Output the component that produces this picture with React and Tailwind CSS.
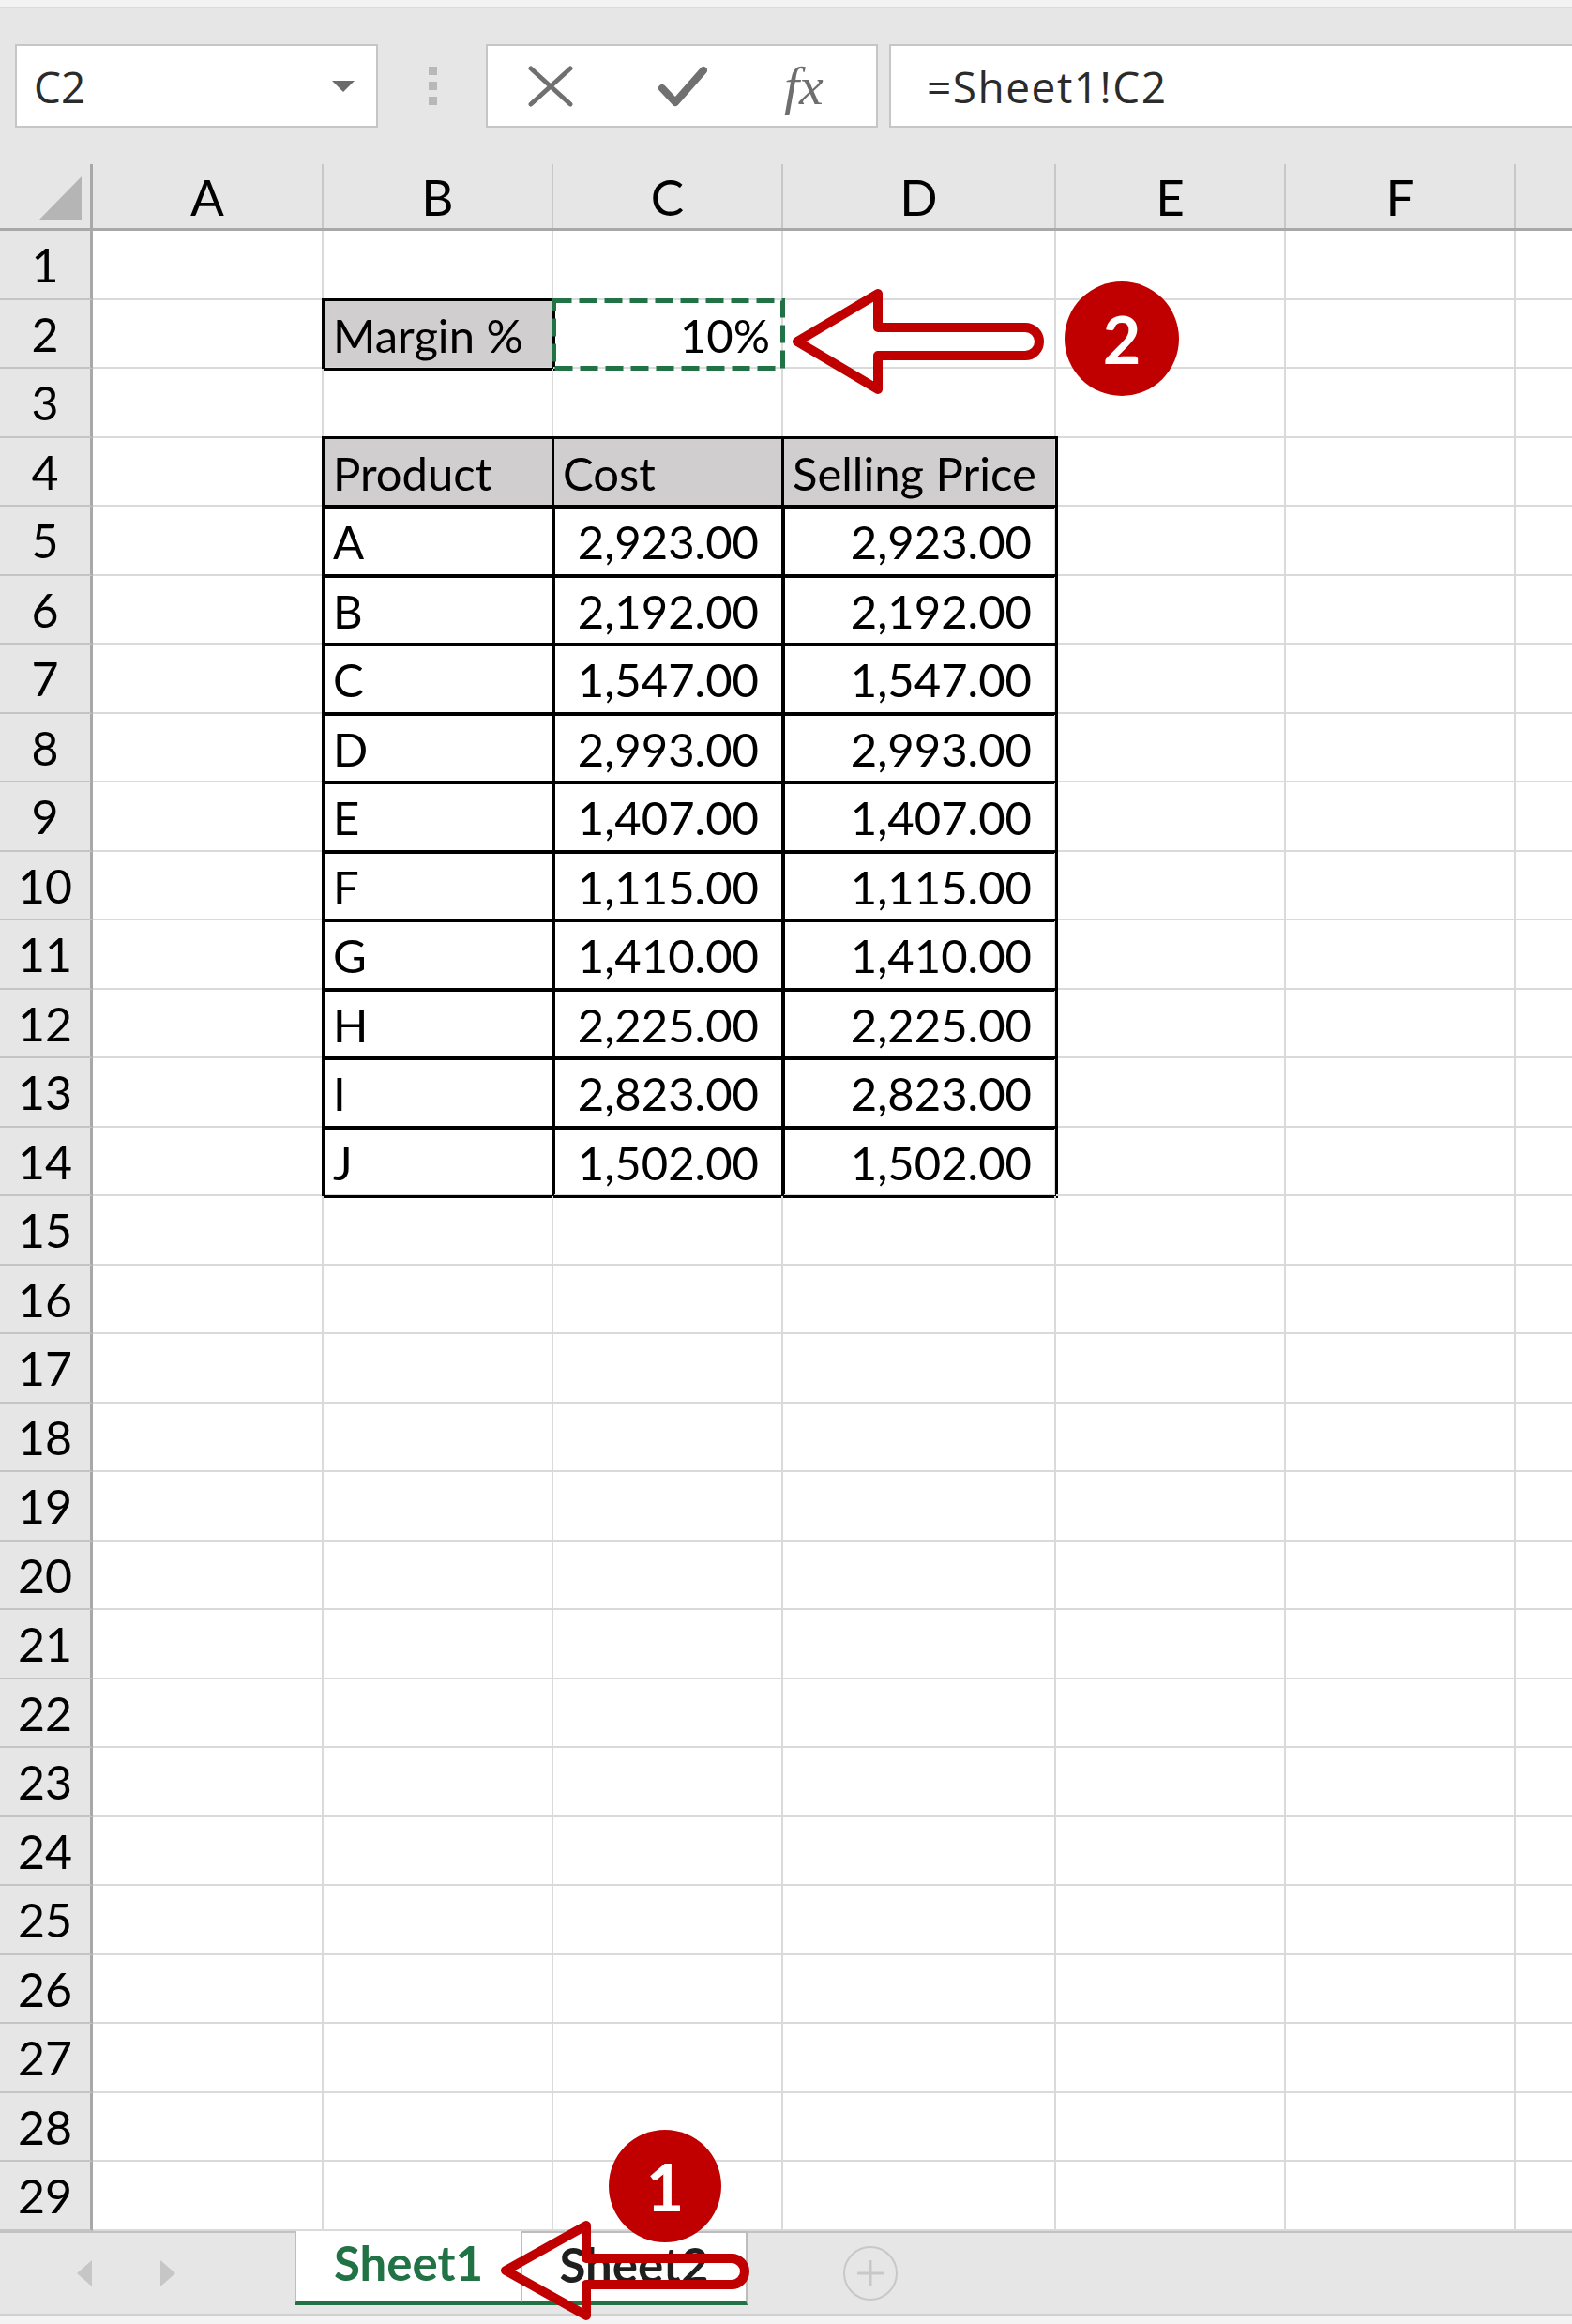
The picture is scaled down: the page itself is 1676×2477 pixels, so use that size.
import React from "react";

const COLS = [
  { key: "A", w: "w-[246px]", label: "A" },
  { key: "B", w: "w-[245px]", label: "B" },
  { key: "C", w: "w-[245px]", label: "C" },
  { key: "D", w: "w-[291px]", label: "D" },
  { key: "E", w: "w-[245px]", label: "E" },
  { key: "F", w: "w-[245px]", label: "F" },
  // G only peeks in at the right edge, its letter is off screen
  { key: "G", w: "w-[245px]", label: "" },
];

const TABLE = [
  ["A", "2,923.00"],
  ["B", "2,192.00"],
  ["C", "1,547.00"],
  ["D", "2,993.00"],
  ["E", "1,407.00"],
  ["F", "1,115.00"],
  ["G", "1,410.00"],
  ["H", "2,225.00"],
  ["I", "2,823.00"],
  ["J", "1,502.00"],
];

const ROWS = Array.from({ length: 29 }, (_, i) => ({
  n: i + 1,
  h: i % 2 === 0 ? "h-[74px]" : "h-[73px]",
}));

// what sits in a cell (row number, column letter)
function getCell(r, c) {
  if (r === 2 && c === "B") return { text: "Margin %", box: true, fill: true };
  if (r === 2 && c === "C") return { text: "10%", right: "pr-[12px]", ants: true };
  if (r === 4) {
    if (c === "B") return { text: "Product", box: true, fill: true };
    if (c === "C") return { text: "Cost", box: true, fill: true };
    if (c === "D") return { text: "Selling Price", box: true, fill: true };
  }
  if (r >= 5 && r <= 14) {
    const [p, v] = TABLE[r - 5];
    if (c === "B") return { text: p, box: true };
    if (c === "C" || c === "D") return { text: v, box: true, right: "pr-[24px]" };
  }
  return null;
}

function Cell({ col, r }) {
  const cell = getCell(r, col.key);
  let cls = `${col.w} shrink-0 h-full flex items-center border-r-2 border-b-2 border-[#dadada] pt-[3px] text-[49px] leading-none text-black`;
  if (cell) {
    cls += cell.right ? ` justify-end ${cell.right}` : " pl-[10px]";
    if (cell.box) cls += " outline-solid outline-[3px] outline-black outline-offset-[-1.5px]";
    if (cell.fill) cls += " bg-[#d0cece]";
    if (cell.ants) cls += " relative";
  }
  return (
    <div className={cls}>
      {cell && <span className="whitespace-nowrap">{cell.text}</span>}
      {cell && cell.ants && (
        <svg className="absolute -left-[2px] -top-[2px] pointer-events-none" width="249" height="77">
          <rect x="2.5" y="2.5" width="244" height="72" fill="none" stroke="#217346" strokeWidth="5" strokeDasharray="19 8" />
        </svg>
      )}
    </div>
  );
}

function FormulaBar() {
  return (
    <div className="h-[175px] bg-[#e6e6e6]">
      <div className="h-[8px] bg-[#f3f3f3] border-b border-[#dcdcdc]" />
      <div className="flex items-start pt-[39px] pl-[16px] overflow-hidden">
        <div className="w-[387px] h-[89px] shrink-0 bg-white border-2 border-[#c6c6c6] flex items-center pl-[18px] pr-[23px]">
          <span className="flex-1 font-['Open_Sans',sans-serif] text-[46px] leading-none text-[#2b2b2b]">C2</span>
          <svg width="24" height="12" viewBox="0 0 24 12">
            <path d="M0 0 H24 L12 12 Z" fill="#6b6b6b" />
          </svg>
        </div>
        <div className="w-[9px] h-[89px] ml-[54px] shrink-0 flex flex-col items-center justify-center gap-[7px]">
          <div className="w-[9px] h-[9px] bg-[#b8b8b8]" />
          <div className="w-[9px] h-[9px] bg-[#b8b8b8]" />
          <div className="w-[9px] h-[9px] bg-[#b8b8b8]" />
        </div>
        <div className="w-[418px] h-[89px] ml-[52px] shrink-0 bg-white border-2 border-[#c6c6c6] flex items-center">
          <svg className="ml-[42px]" width="50" height="44" viewBox="0 0 50 44">
            <path d="M4 3 L46 41 M46 3 L4 41" stroke="#707070" strokeWidth="5" strokeLinecap="round" />
          </svg>
          <svg className="ml-[90px]" width="52" height="44" viewBox="0 0 52 44">
            <path d="M4 24 L18 39 L48 5" fill="none" stroke="#707070" strokeWidth="8" strokeLinecap="round" strokeLinejoin="round" />
          </svg>
          <span className="ml-[82px] font-['Liberation_Serif',serif] italic text-[58px] leading-none text-[#6e6e6e]">fx</span>
        </div>
        <div className="w-[760px] h-[89px] ml-[12px] shrink-0 bg-white border-2 border-[#c6c6c6] flex items-center pl-[38px]">
          <span className="font-['Open_Sans',sans-serif] text-[46px] leading-none tracking-[1.5px] text-[#2b2b2b]">=Sheet1!C2</span>
        </div>
      </div>
    </div>
  );
}

function ColumnHeaders() {
  return (
    <div className="flex h-[71px] bg-[#e6e6e6] border-b-[3px] border-[#a8a8a8]">
      <div className="w-[99px] shrink-0 h-full border-r-[3px] border-[#a8a8a8] flex items-end justify-end pr-[9px] pb-[8px]">
        <svg width="46" height="47" viewBox="0 0 46 47">
          <path d="M46 0 V47 H0 Z" fill="#b5b5b5" />
        </svg>
      </div>
      {COLS.map((c) => (
        <div key={c.key} className={`${c.w} shrink-0 h-full border-r-2 border-[#c8c8c8] flex items-center justify-center text-[53px] leading-none text-black`}>
          {c.label}
        </div>
      ))}
    </div>
  );
}

function SheetTabs() {
  return (
    <div>
      <div className="flex h-[88px] bg-[#e6e6e6]">
        <div className="w-[314px] shrink-0 border-t-2 border-[#c2c2c2] flex items-center pl-[82px] gap-[73px]">
          <svg width="16" height="28" viewBox="0 0 16 28">
            <path d="M16 0 V28 L0 14 Z" fill="#c6c6c6" />
          </svg>
          <svg width="16" height="28" viewBox="0 0 16 28">
            <path d="M0 0 V28 L16 14 Z" fill="#c6c6c6" />
          </svg>
        </div>
        <div className="w-[241px] h-[79px] shrink-0 bg-white border-l-2 border-[#bdbdbd] border-b-[5px] border-b-[#217346] flex items-center justify-center pb-[8px]">
          <span className="font-bold text-[51px] leading-none text-[#217346]">Sheet1</span>
        </div>
        <div className="w-[242px] h-[79px] shrink-0 bg-white border-2 border-[#bdbdbd] border-b-[5px] border-b-[#217346] flex items-center justify-center pb-[6px]">
          <span className="font-bold text-[51px] leading-none text-[#1f1f1f]">Sheet2</span>
        </div>
        <div className="flex-1 border-t-2 border-[#c2c2c2] flex items-center pl-[102px]">
          <div className="w-[58px] h-[58px] rounded-full border-2 border-[#c8c8c8] flex items-center justify-center">
            <svg width="30" height="30" viewBox="0 0 30 30">
              <path d="M15 1 V29 M1 15 H29" stroke="#c8c8c8" strokeWidth="3" />
            </svg>
          </div>
        </div>
      </div>
      <div className="h-[11px] bg-[#f3f3f3] border-t-2 border-[#d0d0d0]" />
    </div>
  );
}

export default function App() {
  return (
    <div className="relative w-[1676px] h-[2477px] overflow-hidden bg-white font-[Lato,sans-serif]">
      <FormulaBar />
      <ColumnHeaders />
      {ROWS.map((row) => (
        <div key={row.n} className={`flex ${row.h}`}>
          <div className="w-[99px] shrink-0 h-full bg-[#e6e6e6] border-r-[3px] border-b-2 border-r-[#a8a8a8] border-b-[#c4c4c4] flex items-center justify-center text-[50px] leading-none text-black">
            {row.n}
          </div>
          {COLS.map((c) => (
            <Cell key={c.key} col={c} r={row.n} />
          ))}
        </div>
      ))}
      <SheetTabs />

      {/* callout arrows */}
      <svg className="absolute left-0 top-0 pointer-events-none" width="1676" height="2477" viewBox="0 0 1676 2477">
        <path
          d="M850 364 L936 313 L936 349 L1093 349 A15 15 0 0 1 1093 379 L936 379 L936 415 Z"
          fill="none"
          stroke="#c00000"
          strokeWidth="10"
          strokeLinejoin="round"
        />
        <path
          d="M539 2420 L625 2372 L625 2407 L780 2407 A14 14 0 0 1 780 2435 L625 2435 L625 2468 Z"
          fill="none"
          stroke="#c00000"
          strokeWidth="10"
          strokeLinejoin="round"
        />
      </svg>
      <div className="absolute left-[1135px] top-[300px] w-[122px] h-[122px] rounded-full bg-[#c00000] flex items-center justify-center text-white font-bold text-[70px] leading-none">
        2
      </div>
      <div className="absolute left-[649px] top-[2270px] w-[120px] h-[120px] rounded-full bg-[#c00000] flex items-center justify-center text-white font-bold text-[70px] leading-none">
        1
      </div>
    </div>
  );
}
